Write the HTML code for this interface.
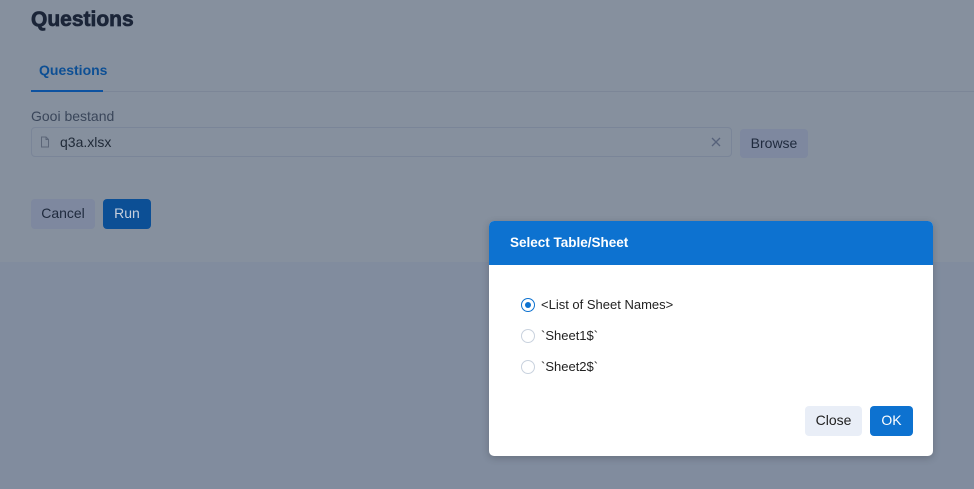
<!DOCTYPE html>
<html><head><style>
body{margin:0;width:974px;height:489px;background:#818c9e;font-family:"Liberation Sans",sans-serif;position:relative;overflow:hidden}
.page{position:absolute;left:0;top:0;width:974px;height:262px;background:#86909e}
.abs{position:absolute}
h1{position:absolute;left:31px;top:8px;margin:0;font-size:21px;font-weight:bold;color:#1b2538;-webkit-text-stroke:0.7px #1b2538}
.tab{left:39px;top:62px;font-size:14px;font-weight:bold;color:#0d4f94}
.tabline{left:31px;top:90px;width:72px;height:2px;background:#0d52a0}
.sep{left:103px;top:91px;width:871px;height:1px;background:#7c8697}
.lbl{left:31px;top:108px;font-size:14px;color:#3a465a}
.inp{left:31px;top:127px;width:699px;height:28px;border:1px solid #7a8598;border-radius:4px}
.btn{border-radius:4px;font-size:14px;text-align:center}
.modal{left:489px;top:221px;width:444px;height:235px;background:#fff;border-radius:5px;overflow:hidden;box-shadow:0 2px 8px rgba(0,0,0,.2)}
.mh{height:44px;background:#0d72d0;color:#fff;font-weight:bold;font-size:13.5px;line-height:44px;padding-left:21px}
.radio{position:absolute;left:32px;width:12px;height:12px;border:1px solid #c9d2de;border-radius:50%}
.rt{position:absolute;left:52px;font-size:13px;color:#222}
</style></head><body>
<div class="page"></div>
<h1>Questions</h1>
<div class="abs tab">Questions</div>
<div class="abs tabline"></div>
<div class="abs sep"></div>
<div class="abs lbl">Gooi bestand</div>
<div class="abs inp"></div>
<svg class="abs" style="left:40px;top:136px" width="10" height="12" viewBox="0 0 10 12"><path d="M1.5 1h4.5l2.5 2.5v7.5h-7z M6 1v2.5h2.5" fill="none" stroke="#5c6678" stroke-width="1"/></svg>
<div class="abs" style="left:60px;top:134px;font-size:14px;color:#1f2937">q3a.xlsx</div>
<svg class="abs" style="left:711px;top:137px" width="10" height="10" viewBox="0 0 10 10"><path d="M1 1L9 9M9 1L1 9" stroke="#56627a" stroke-width="1.3"/></svg>
<div class="abs btn" style="left:740px;top:129px;width:68px;height:29px;line-height:28px;background:#7e889f;color:#1f2a3d">Browse</div>
<div class="abs btn" style="left:31px;top:199px;width:64px;height:30px;line-height:28px;background:#7e889f;color:#1f2a3d">Cancel</div>
<div class="abs btn" style="left:103px;top:199px;width:48px;height:30px;line-height:28px;background:#0c4f95;color:#c6cfdc">Run</div>
<div class="abs modal">
<div class="mh">Select Table/Sheet</div>
<div class="radio" style="top:77px;border-color:#0d72d0"><div style="position:absolute;left:3px;top:3px;width:6px;height:6px;border-radius:50%;background:#0d72d0"></div></div>
<div class="rt" style="top:76px">&lt;List of Sheet Names&gt;</div>
<div class="radio" style="top:108px"></div>
<div class="rt" style="top:107px">`Sheet1$`</div>
<div class="radio" style="top:139px"></div>
<div class="rt" style="top:138px">`Sheet2$`</div>
<div class="abs btn" style="left:316px;top:185px;width:57px;height:30px;line-height:28px;background:#e9eef7;color:#222">Close</div>
<div class="abs btn" style="left:381px;top:185px;width:43px;height:30px;line-height:28px;background:#0d72d0;color:#fff">OK</div>
</div>
</body></html>
